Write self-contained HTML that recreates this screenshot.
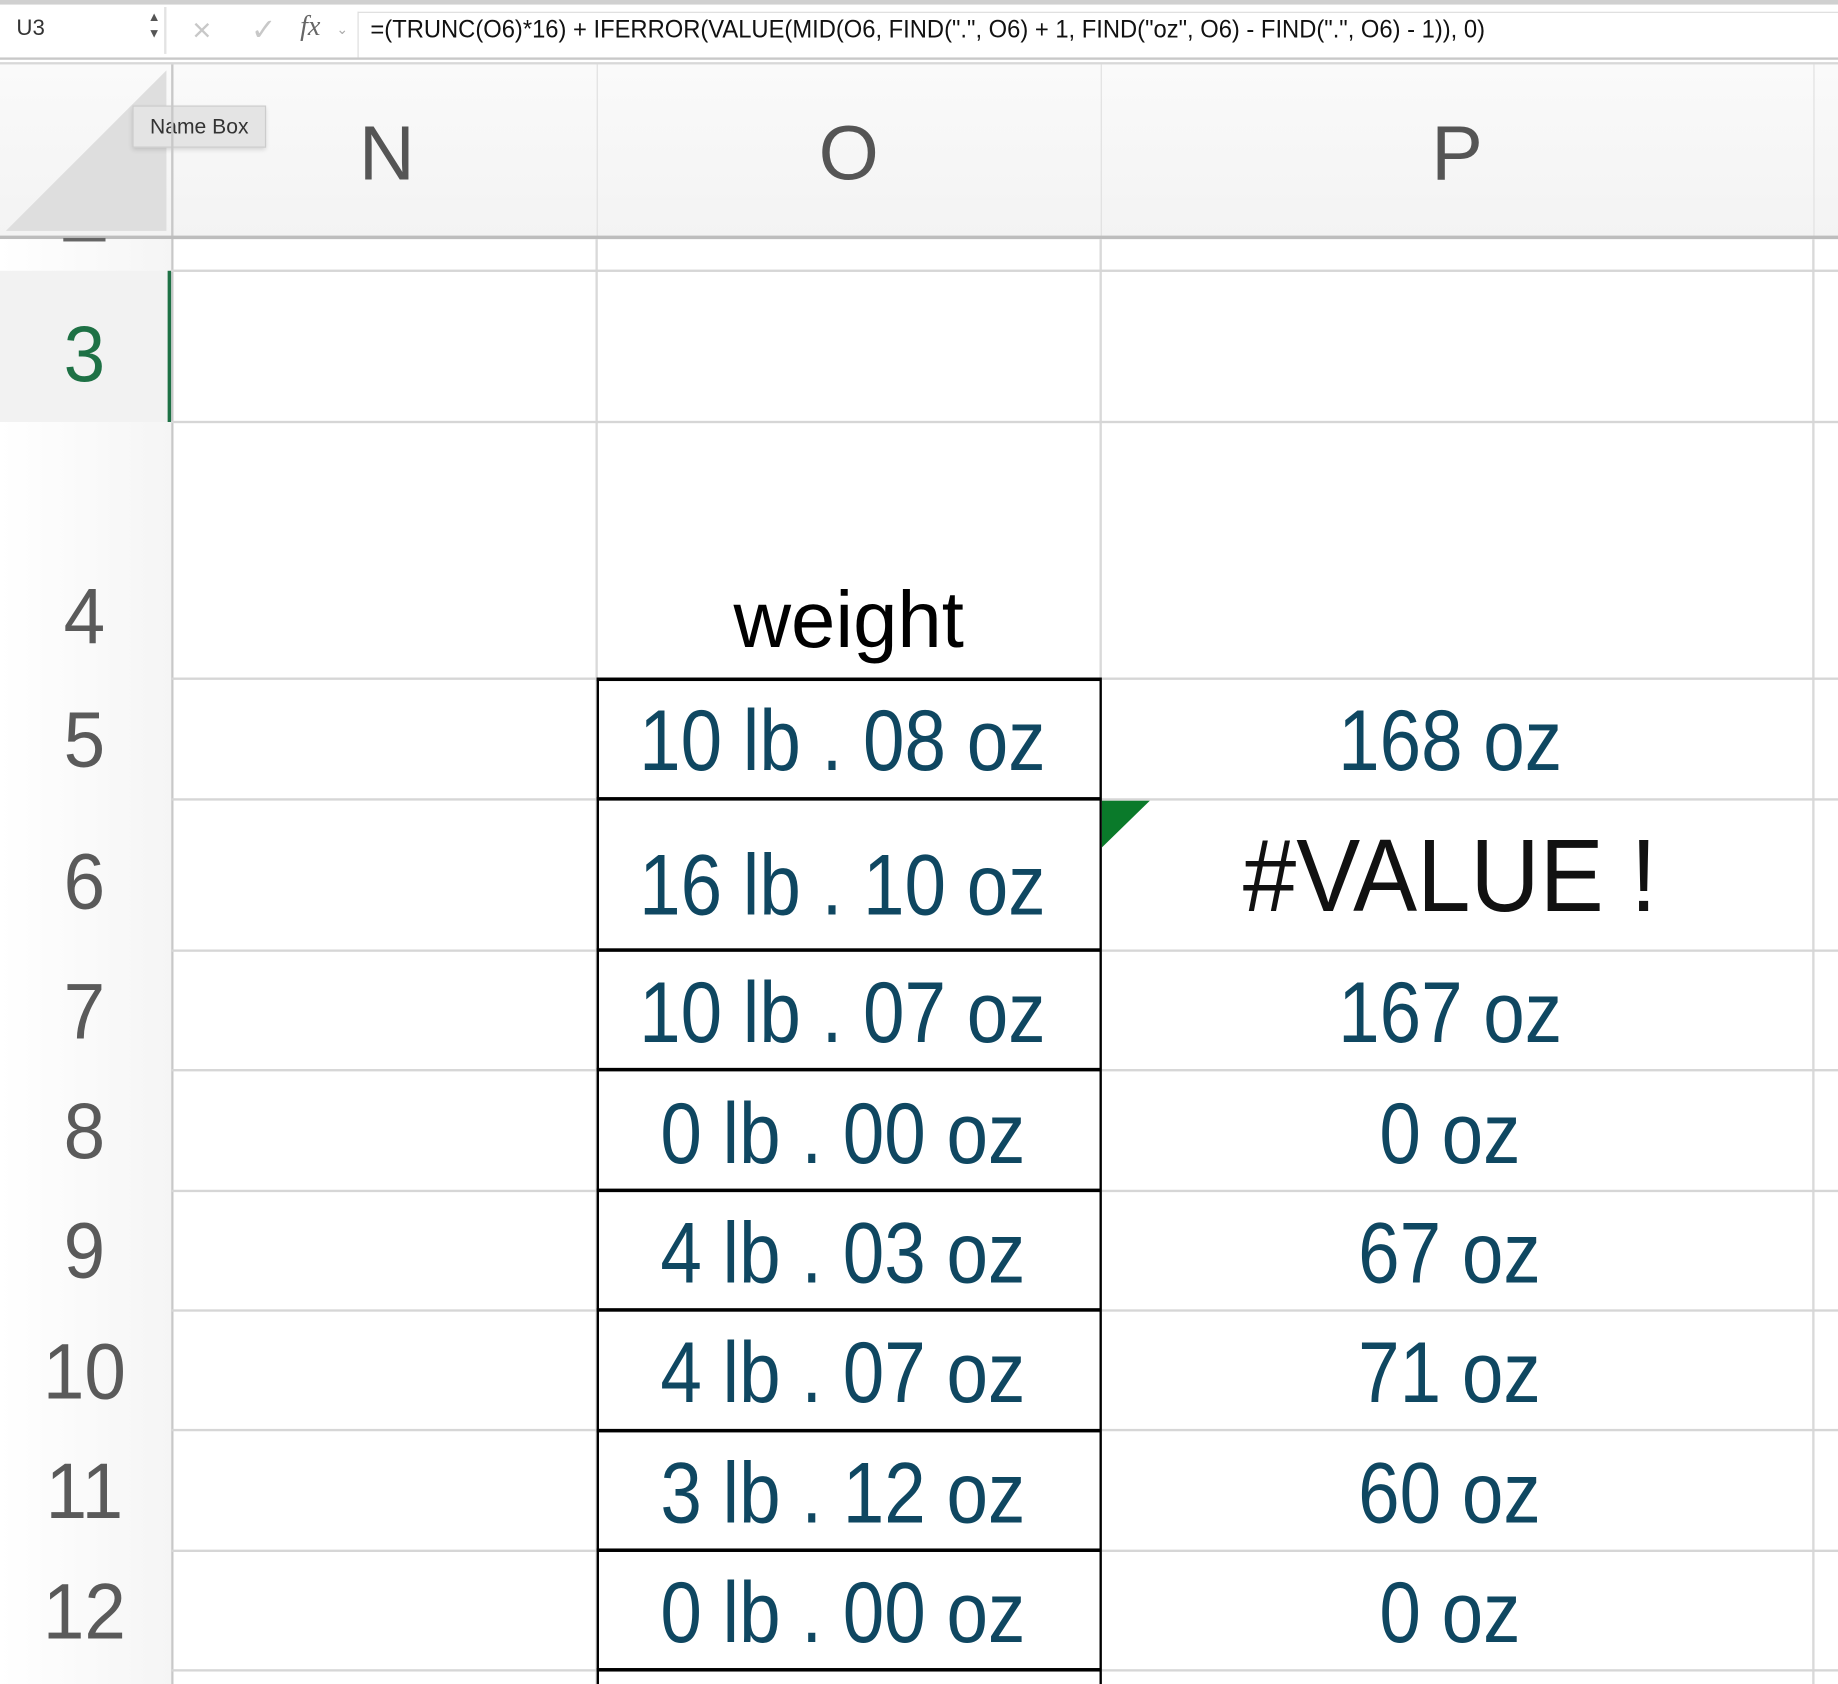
<!DOCTYPE html>
<html><head><meta charset="utf-8"><style>
html,body{margin:0;padding:0;background:#fff;overflow:hidden;width:1838px;height:1684px}
#w{position:absolute;left:0;top:0;width:1568px;height:1437px;transform:scale(1.17219);transform-origin:0 0;font-family:"Liberation Sans",sans-serif;background:#fff}
.a{position:absolute}
.hl{position:absolute;left:146px;width:1422px;height:2px;background:#d6d6d6}
.vl{position:absolute;width:2px;background:#d9d9d9}
.rn{position:absolute;left:0;width:144px;text-align:center;font-size:67px;color:#5a5a5a;transform:scaleX(.95)}
.v{position:absolute;text-align:center;color:#0f4761;font-size:74px;white-space:nowrap}
.v span{display:inline-block;transform:scaleX(.86)}
.ob{position:absolute;left:509px;width:430px;height:3px;background:#000}
</style></head><body><div id="w">
<div class="a" style="left:0;top:0;width:1568px;height:4px;background:#d0d0d0"></div>
<div class="a" style="left:0;top:4px;width:1568px;height:44px;background:#fff"></div>
<div class="a" style="left:0;top:6px;width:140px;height:40px;background:#fff;border-right:2px solid #e3e3e3"></div>
<div class="a" style="left:14px;top:14px;font-size:19px;color:#333">U3</div>
<div class="a" style="left:126px;top:8px;font-size:11px;color:#555;line-height:14px">▲<br>▼</div>
<div class="a" style="left:164px;top:10px;font-size:28px;color:#c8c8c8">×</div>
<div class="a" style="left:214px;top:10px;font-size:26px;color:#c8c8c8">✓</div>
<div class="a" style="left:256px;top:10px;font-size:24px;color:#666;font-style:italic;font-family:'Liberation Serif',serif">fx</div>
<div class="a" style="left:287px;top:18px;font-size:12px;color:#aaa">⌄</div>
<div class="a" style="left:305px;top:10px;width:1263px;height:38px;border-top:1px solid #ddd;border-left:1px solid #ddd"></div>
<div class="a" style="left:316px;top:14px;font-size:21px;color:#111;white-space:nowrap;transform:scaleX(.965);transform-origin:0 0">=(TRUNC(O6)*16) + IFERROR(VALUE(MID(O6, FIND(".", O6) + 1, FIND("oz", O6) - FIND(".", O6) - 1)), 0)</div>
<div class="a" style="left:0;top:49px;width:1568px;height:2px;background:#c8c8c8"></div>
<div class="a" style="left:0;top:53px;width:1568px;height:2px;background:#d8d8d8"></div>
<div class="a" style="left:0;top:55px;width:1568px;height:147px;background:linear-gradient(#fafafa,#f3f3f3)"></div>
<svg class="a" style="left:0;top:55px" width="146" height="147"><polygon points="142,5 142,142 5,142" fill="#dedede"/></svg>
<div class="a" style="left:113px;top:90px;width:112px;height:34px;background:#e4e4e4;border:1px solid #ccc;box-shadow:0 2px 4px rgba(0,0,0,.15);font-size:18px;color:#333;line-height:34px;text-align:center">Name Box</div>
<div class="a" style="left:146px;top:55px;width:2px;height:1382px;background:#c8c8c8"></div>
<div class="a" style="left:509px;top:55px;width:1px;height:147px;background:#e0e0e0"></div>
<div class="a" style="left:939px;top:55px;width:1px;height:147px;background:#e0e0e0"></div>
<div class="a" style="left:1547px;top:55px;width:1px;height:147px;background:#e0e0e0"></div>
<div class="a" style="left:280px;top:92px;width:100px;text-align:center;font-size:66px;color:#555">N</div>
<div class="a" style="left:674px;top:92px;width:100px;text-align:center;font-size:66px;color:#555">O</div>
<div class="a" style="left:1193px;top:92px;width:100px;text-align:center;font-size:66px;color:#555">P</div>
<div class="a" style="left:0;top:201px;width:1568px;height:3px;background:#bdbdbd"></div>
<div class="a" style="left:0;top:204px;width:146px;height:1233px;background:linear-gradient(90deg,#fff,#f5f5f5)"></div>
<div class="a" style="left:0;top:231px;width:146px;height:129px;background:#f2f2f2"></div>
<div class="a" style="left:143px;top:231px;width:3px;height:129px;background:#1e7145"></div>
<div class="a" style="left:54px;top:203px;width:36px;height:3px;background:#666"></div>
<div class="vl" style="left:508px;top:204px;height:1233px"></div>
<div class="vl" style="left:938px;top:204px;height:1233px"></div>
<div class="vl" style="left:1546px;top:204px;height:1233px"></div>
<div class="hl" style="top:230px"></div>
<div class="hl" style="top:359px"></div>
<div class="hl" style="top:578px"></div>
<div class="hl" style="top:681px"></div>
<div class="hl" style="top:810px"></div>
<div class="hl" style="top:912px"></div>
<div class="hl" style="top:1015px"></div>
<div class="hl" style="top:1117px"></div>
<div class="hl" style="top:1219px"></div>
<div class="hl" style="top:1322px"></div>
<div class="hl" style="top:1424px"></div>
<div class="a" style="left:509px;top:578px;width:2px;height:859px;background:#000"></div>
<div class="a" style="left:938px;top:578px;width:2px;height:859px;background:#000"></div>
<div class="ob" style="top:578px"></div>
<div class="ob" style="top:680px"></div>
<div class="ob" style="top:809px"></div>
<div class="ob" style="top:911px"></div>
<div class="ob" style="top:1014px"></div>
<div class="ob" style="top:1116px"></div>
<div class="ob" style="top:1219px"></div>
<div class="ob" style="top:1321px"></div>
<div class="ob" style="top:1423px"></div>
<div class="rn" style="top:264px;color:#1e7145">3</div>
<div class="rn" style="top:488px">4</div>
<div class="rn" style="top:593px">5</div>
<div class="rn" style="top:714px">6</div>
<div class="rn" style="top:825px">7</div>
<div class="rn" style="top:927px">8</div>
<div class="rn" style="top:1029px">9</div>
<div class="rn" style="top:1132px">10</div>
<div class="rn" style="top:1234px">11</div>
<div class="rn" style="top:1337px">12</div>
<div class="a" style="left:509px;top:490px;width:430px;text-align:center;font-size:68px;color:#000"><span style="display:inline-block;transform:scaleX(1)">weight</span></div>
<div class="v" style="left:509px;width:420px;top:589px"><span>10 lb . 08 oz</span></div>
<div class="v" style="left:509px;width:420px;top:712px"><span>16 lb . 10 oz</span></div>
<div class="v" style="left:509px;width:420px;top:821px"><span>10 lb . 07 oz</span></div>
<div class="v" style="left:509px;width:420px;top:924px"><span>0 lb . 00 oz</span></div>
<div class="v" style="left:509px;width:420px;top:1026px"><span>4 lb . 03 oz</span></div>
<div class="v" style="left:509px;width:420px;top:1128px"><span>4 lb . 07 oz</span></div>
<div class="v" style="left:509px;width:420px;top:1231px"><span>3 lb . 12 oz</span></div>
<div class="v" style="left:509px;width:420px;top:1333px"><span>0 lb . 00 oz</span></div>
<div class="v" style="left:939px;width:596px;top:589px"><span>168 oz</span></div>
<div class="a" style="left:939px;width:596px;top:696px;text-align:center;font-size:88px;color:#111;white-space:nowrap"><span style="display:inline-block;transform:scaleX(.93)">#VALUE !</span></div>
<div class="v" style="left:939px;width:596px;top:821px"><span>167 oz</span></div>
<div class="v" style="left:939px;width:596px;top:924px"><span>0 oz</span></div>
<div class="v" style="left:939px;width:596px;top:1026px"><span>67 oz</span></div>
<div class="v" style="left:939px;width:596px;top:1128px"><span>71 oz</span></div>
<div class="v" style="left:939px;width:596px;top:1231px"><span>60 oz</span></div>
<div class="v" style="left:939px;width:596px;top:1333px"><span>0 oz</span></div>
<svg class="a" style="left:940px;top:683px" width="42" height="42"><polygon points="0,0 41,0 0,40" fill="#0a7a2a"/></svg>
</div></body></html>
